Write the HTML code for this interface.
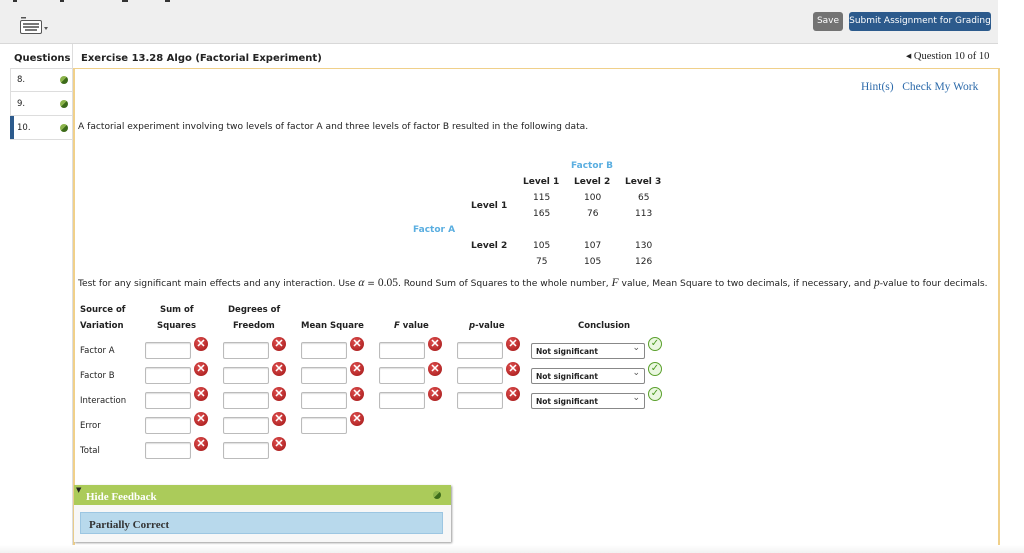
<!DOCTYPE html>
<html><head><meta charset="utf-8"><style>
*{margin:0;padding:0;box-sizing:border-box}
body{width:1024px;height:553px;overflow:hidden;background:#fff;font-family:"DejaVu Sans","Liberation Sans",sans-serif;font-size:9px;color:#222;position:relative}
.a{position:absolute;white-space:nowrap}
.b{font-weight:bold}
.serif{font-family:"Liberation Serif",serif}
.inp{position:absolute;width:46px;height:17px;border:1px solid #bbb;border-radius:2px;background:#fff;box-shadow:inset 0 1px 1px #ddd}
.x{position:absolute;width:14px;height:14px;border-radius:50%;background:radial-gradient(circle at 40% 35%,#e05050,#a01515);color:#fff;font-size:11px;line-height:14px;text-align:center;font-weight:bold;font-family:"Liberation Sans",sans-serif}
.sel{position:absolute;left:531px;width:114px;height:16px;border:1px solid #888;border-radius:2px;font-weight:bold;font-size:7.5px;padding:3px 4px;background:#fff}
.sel:after{content:"⌄";position:absolute;right:4px;top:-1px;font-size:9px;font-weight:normal;color:#555}
.ck{position:absolute;left:648px;width:14px;height:14px;border-radius:50%;border:1.5px solid #5aa02c;background:#eaf7e0;color:#4a9a20;font-size:10px;line-height:11px;text-align:center;font-weight:bold}
.dot{position:absolute;width:8px;height:8px;border-radius:50%;background:linear-gradient(135deg,#8bb34a 50%,#3d6b1a 50%)}
</style></head><body>
<div class="a" style="left:0;top:0;width:998px;height:44px;background:#efefef"></div>
<div class="a" style="left:13px;top:0;width:4px;height:2px;background:#333"></div>
<div class="a" style="left:60px;top:0;width:4px;height:2px;background:#333"></div>
<div class="a" style="left:122px;top:0;width:6px;height:2px;background:#333"></div>
<div class="a" style="left:165px;top:0;width:5px;height:2px;background:#333"></div>
<svg class="a" style="left:19px;top:16px" width="32" height="20"><rect x="2" y="1" width="5" height="1.5" fill="#555"/><rect x="1.5" y="4.5" width="21" height="13" rx="1.5" fill="#fff" stroke="#555"/><g fill="#777"><rect x="4" y="7" width="16" height="2"/><rect x="4" y="10" width="16" height="2"/><rect x="6" y="13" width="12" height="2"/></g><path d="M25 11l4 0-2 3z" fill="#555"/></svg>
<div class="a" style="left:813px;top:12px;width:30px;height:19px;background:#737373;border-radius:3px;color:#fff;font-size:9px;line-height:19px;text-align:center">Save</div>
<div class="a" style="left:849px;top:12px;width:142px;height:19px;background:#2c5a8c;border-radius:3px;color:#fff;font-size:9px;line-height:19px;text-align:center">Submit Assignment for Grading</div>
<div class="a" style="left:0;top:43px;width:998px;height:1px;background:#d8d8d8"></div>
<div class="a" style="left:72px;top:44px;width:1px;height:509px;background:#ddd"></div>
<div class="a b" style="left:14px;top:53px;font-size:10px">Questions</div>
<div class="a b" style="left:81px;top:53px;font-size:10px">Exercise 13.28 Algo (Factorial Experiment)</div>
<div class="a serif" style="left:906px;top:50px;font-size:10.5px">◂ Question 10 of 10</div>
<div class="a" style="left:10px;top:68px;width:62px;height:1px;background:#ddd"></div>
<div class="a" style="left:10px;top:91px;width:62px;height:1px;background:#ddd"></div>
<div class="a" style="left:10px;top:115px;width:62px;height:1px;background:#ddd"></div>
<div class="a" style="left:10px;top:139px;width:62px;height:1px;background:#ddd"></div>
<div class="a" style="left:10px;top:68px;width:1px;height:72px;background:#ddd"></div>
<div class="a" style="left:10px;top:116px;width:4px;height:23px;background:#2c5a8c"></div>
<div class="a" style="left:17px;top:75px;font-size:8.5px">8.</div>
<div class="a" style="left:17px;top:99px;font-size:8.5px">9.</div>
<div class="a" style="left:17px;top:123px;font-size:8.5px">10.</div>
<div class="dot" style="left:60px;top:76px"></div>
<div class="dot" style="left:60px;top:100px"></div>
<div class="dot" style="left:60px;top:124px"></div>
<div class="a" style="left:73px;top:68px;width:927px;height:485px;border-left:2px solid #f0d08a;border-top:1px solid #f0d08a;border-right:2px solid #f0d08a"></div>
<div class="a" style="left:0;top:545px;width:1024px;height:8px;background:linear-gradient(#fff,#f2f2f2)"></div>
<div class="a serif" style="left:861px;top:81px;font-size:11.5px;color:#2c6aaa">Hint(s)&nbsp;&nbsp;&nbsp;Check My Work</div>
<div class="a" style="left:78px;top:122px;font-size:9.1px">A factorial experiment involving two levels of factor A and three levels of factor B resulted in the following data.</div>
<div class="a b" style="left:571px;top:161px;color:#5aaee0">Factor B</div>
<div class="a b" style="left:523px;top:177px">Level 1</div>
<div class="a b" style="left:574px;top:177px">Level 2</div>
<div class="a b" style="left:625px;top:177px">Level 3</div>
<div class="a b" style="left:471px;top:201px">Level 1</div>
<div class="a b" style="left:471px;top:241px">Level 2</div>
<div class="a b" style="left:413px;top:225px;color:#5aaee0">Factor A</div>
<div class="a" style="left:533px;top:193px">115</div><div class="a" style="left:584px;top:193px">100</div><div class="a" style="left:638px;top:193px">65</div>
<div class="a" style="left:533px;top:209px">165</div><div class="a" style="left:587px;top:209px">76</div><div class="a" style="left:635px;top:209px">113</div>
<div class="a" style="left:533px;top:241px">105</div><div class="a" style="left:584px;top:241px">107</div><div class="a" style="left:635px;top:241px">130</div>
<div class="a" style="left:536px;top:257px">75</div><div class="a" style="left:584px;top:257px">105</div><div class="a" style="left:635px;top:257px">126</div>
<div class="a" style="left:78px;top:277px;font-size:9.15px">Test for any significant main effects and any interaction. Use <i class="serif" style="font-size:11.5px">α</i> = <span class="serif" style="font-size:11.5px">0.05</span>. Round Sum of Squares to the whole number, <i class="serif" style="font-size:11.5px">F</i> value, Mean Square to two decimals, if necessary, and <i class="serif" style="font-size:11.5px">p</i>-value to four decimals.</div>
<div class="a b" style="left:80px;top:305px;font-size:8.5px">Source of</div>
<div class="a b" style="left:80px;top:321px;font-size:8.5px">Variation</div>
<div class="a b" style="left:160px;top:305px;font-size:8.5px">Sum of</div>
<div class="a b" style="left:157px;top:321px;font-size:8.5px">Squares</div>
<div class="a b" style="left:228px;top:305px;font-size:8.5px">Degrees of</div>
<div class="a b" style="left:233px;top:321px;font-size:8.5px">Freedom</div>
<div class="a b" style="left:301px;top:321px;font-size:8.5px">Mean Square</div>
<div class="a b" style="left:394px;top:321px;font-size:8.5px"><i>F</i> value</div>
<div class="a b" style="left:469px;top:321px;font-size:8.5px"><i>p</i>-value</div>
<div class="a b" style="left:578px;top:321px;font-size:8.5px">Conclusion</div>
<div class="a" style="left:80px;top:346px;font-size:8.5px">Factor A</div>
<div class="a" style="left:80px;top:371px;font-size:8.5px">Factor B</div>
<div class="a" style="left:80px;top:396px;font-size:8.5px">Interaction</div>
<div class="a" style="left:80px;top:421px;font-size:8.5px">Error</div>
<div class="a" style="left:80px;top:446px;font-size:8.5px">Total</div>
<div id="g"></div>
<script>
var cols=[145,223,301,379,457],rows=[342,367,392,417,442],n=[5,5,5,3,2],h='';
for(var r=0;r<5;r++){for(var c=0;c<n[r];c++){h+='<div class="inp" style="left:'+cols[c]+'px;top:'+rows[r]+'px"></div><div class="x" style="left:'+(cols[c]+49)+'px;top:'+(rows[r]-5)+'px">✕</div>';}
if(r<3){h+='<div class="sel" style="top:'+(rows[r]+1)+'px">Not significant</div><div class="ck" style="top:'+(rows[r]-5)+'px">✓</div>';}}
document.getElementById('g').innerHTML=h;
</script>
<div class="a" style="left:74px;top:485px;width:377px;height:57px;background:#f7f7f7;box-shadow:1px 1px 2px #999"></div>
<div class="a" style="left:74px;top:485px;width:377px;height:20px;background:#abcb5a"></div>
<div class="a" style="left:76px;top:486px;font-size:7px;color:#222">▼</div>
<div class="a serif b" style="left:86px;top:491px;font-size:11px;color:#fff">Hide Feedback</div>
<div class="dot" style="left:433px;top:491px"></div>
<div class="a" style="left:80px;top:512px;width:363px;height:22px;background:#b8d9ec;border:1px solid #9cc6e2"></div>
<div class="a serif b" style="left:89px;top:519px;font-size:11px;color:#333">Partially Correct</div>
</body></html>
